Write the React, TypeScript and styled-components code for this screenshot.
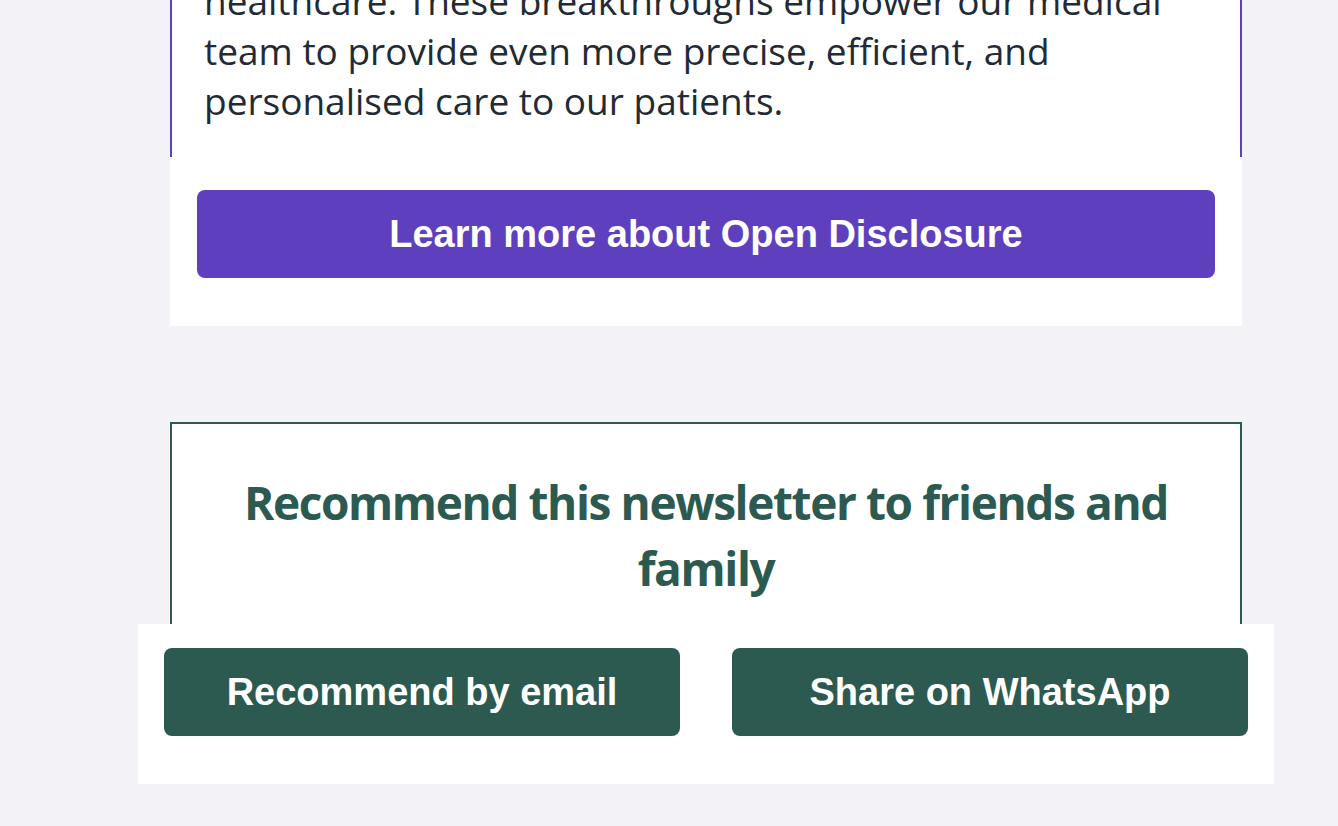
import React from 'react';
import styled, { createGlobalStyle } from 'styled-components';

const GlobalStyle = createGlobalStyle`
  html, body {
    margin: 0;
    padding: 0;
    background: #f3f2f7;
    overflow: hidden;
  }
`;

const Page = styled.div`
  width: 1136px;
  margin: -24px 0 0 138px;
  display: flex;
  flex-direction: column;
`;

const Story = styled.div`
  margin: 0 32px;
  display: flex;
  flex-direction: column;
`;

const StoryBody = styled.div`
  background: #ffffff;
  border-left: 2px solid #5e3fbe;
  border-right: 2px solid #5e3fbe;
  padding: 0 32px 31px 32px;
`;

const Paragraph = styled.p`
  margin: 0;
  font-family: 'Open Sans', 'Noto Sans', sans-serif;
  font-size: 37px;
  line-height: 50px;
  color: #222a35;
`;

const ButtonRow = styled.div<{ $wide?: boolean }>`
  background: #ffffff;
  display: flex;
  gap: 52px;
  padding: ${(p) => (p.$wide ? '24px 26px 48px' : '33px 27px 48px')};
`;

const ActionButton = styled.a<{ $tone: 'purple' | 'green' }>`
  flex: 1;
  height: 88px;
  display: flex;
  align-items: center;
  justify-content: center;
  border-radius: 8px;
  background: ${(p) => (p.$tone === 'purple' ? '#5e3fbe' : '#2c5a51')};
  color: #ffffff;
  font-family: 'Liberation Sans', Arial, sans-serif;
  font-weight: 700;
  font-size: 38px;
  text-decoration: none;
  cursor: pointer;
`;

const Recommend = styled.div`
  margin: 96px 32px 0;
  background: #ffffff;
  border: 2px solid #2c5a51;
  border-bottom: none;
  padding: 45px 40px 23px;
`;

const Heading = styled.h2`
  margin: 0;
  text-align: center;
  font-family: 'Open Sans', 'Noto Sans', sans-serif;
  font-weight: 700;
  font-size: 46px;
  line-height: 66px;
  letter-spacing: -1.4px;
  color: #2c5a51;
`;

export default function App() {
  return (
    <>
      <GlobalStyle />
      <Page>
        <Story>
          <StoryBody>
            <Paragraph>
              healthcare. These breakthroughs empower our medical team to provide even more
              precise, efficient, and personalised care to our patients.
            </Paragraph>
          </StoryBody>
          <ButtonRow>
            <ActionButton $tone="purple">Learn more about Open Disclosure</ActionButton>
          </ButtonRow>
        </Story>
        <Recommend>
          <Heading>Recommend this newsletter to friends and family</Heading>
        </Recommend>
        <ButtonRow $wide>
          <ActionButton $tone="green">Recommend by email</ActionButton>
          <ActionButton $tone="green">Share on WhatsApp</ActionButton>
        </ButtonRow>
      </Page>
    </>
  );
}
